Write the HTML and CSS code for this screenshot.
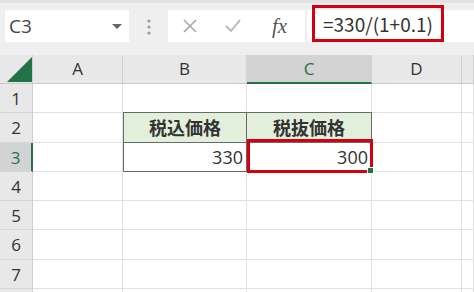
FILE: index.html
```html
<!DOCTYPE html>
<html lang="ja">
<head>
    <meta charset="UTF-8">
    <title>税抜価格</title>
    <link rel="stylesheet" href="styles.css">
</head>
<body>
    <div class="toolbar">
        <div class="namebox">
            <span>C3</span>
            <span class="caret"></span>
        </div>
        <svg class="dots" width="6" height="18" viewBox="0 0 6 18">
            <circle cx="3" cy="3" r="1.6" fill="#9a9a9a"/>
            <circle cx="3" cy="9" r="1.6" fill="#9a9a9a"/>
            <circle cx="3" cy="15" r="1.6" fill="#9a9a9a"/>
        </svg>
        <div class="fxbtns">
            <svg width="16" height="16" viewBox="0 0 16 16">
                <path d="M2 2 L14 14 M14 2 L2 14" stroke="#a8a8a8" stroke-width="1.6" fill="none"/>
            </svg>
            <svg width="16" height="14" viewBox="0 0 16 14">
                <path d="M1 7 L6 12 L15 1" stroke="#b4b4b4" stroke-width="1.8" fill="none"/>
            </svg>
            <span class="fx">fx</span>
        </div>
        <div class="formula">
            <span class="formula-text">=330/(1+0.1)</span>
        </div>
    </div>

    <div class="sheet">
        <div class="corner"><span class="tri"></span></div>
        <div class="colhead">A</div>
        <div class="colhead">B</div>
        <div class="colhead active">C</div>
        <div class="colhead">D</div>
        <div class="colhead"></div>

        <div class="rowhead">1</div>
        <div class="cell"></div><div class="cell"></div><div class="cell"></div><div class="cell"></div><div class="cell"></div>

        <div class="rowhead">2</div>
        <div class="cell"></div>
        <div class="cell title first">税込価格</div>
        <div class="cell title">税抜価格</div>
        <div class="cell"></div><div class="cell"></div>

        <div class="rowhead active">3</div>
        <div class="cell"></div>
        <div class="cell num first">330</div>
        <div class="cell num selected">300<span class="handle"></span></div>
        <div class="cell"></div><div class="cell"></div>

        <div class="rowhead">4</div>
        <div class="cell"></div><div class="cell"></div><div class="cell"></div><div class="cell"></div><div class="cell"></div>
        <div class="rowhead">5</div>
        <div class="cell"></div><div class="cell"></div><div class="cell"></div><div class="cell"></div><div class="cell"></div>
        <div class="rowhead">6</div>
        <div class="cell"></div><div class="cell"></div><div class="cell"></div><div class="cell"></div><div class="cell"></div>
        <div class="rowhead">7</div>
        <div class="cell"></div><div class="cell"></div><div class="cell"></div><div class="cell"></div><div class="cell"></div>
        <div class="rowhead last"></div>
        <div class="cell last"></div><div class="cell last"></div><div class="cell last"></div><div class="cell last"></div><div class="cell last"></div>
    </div>
</body>
</html>
```

FILE: styles.css
```css
body {
    margin: 0;
    width: 474px;
    height: 292px;
    overflow: hidden;
    background: #fff;
    font-family: "Open Sans", "Noto Sans CJK JP", sans-serif;
    color: #333;
}
.toolbar {
    display: flex;
    align-items: flex-start;
    height: 55px;
    box-sizing: border-box;
    padding: 7px 0 0 5px;
    background: #efefef;
    border-top: 3px solid #e2e2e2;
}
.namebox {
    width: 124px;
    height: 32px;
    background: #fff;
    display: flex;
    align-items: center;
    justify-content: space-between;
    padding: 0 7px 0 4px;
    box-sizing: border-box;
    font-size: 19px;
    color: #444;
}
.caret {
    width: 0;
    height: 0;
    border-left: 5px solid transparent;
    border-right: 5px solid transparent;
    border-top: 5px solid #666;
}
.dots {
    margin: 8px 16px 0 17px;
}
.fxbtns {
    width: 137px;
    height: 32px;
    background: #fff;
    display: flex;
    align-items: center;
    box-sizing: border-box;
    padding-left: 14px;
    gap: 27px;
}
.fx {
    font-family: "Liberation Serif", serif;
    font-style: italic;
    font-size: 21px;
    color: #555;
    margin-left: 4px;
}
.formula {
    flex: 1;
    height: 32px;
    margin-left: 2px;
    background: #fff;
    padding-left: 5px;
}
.formula-text {
    display: inline-block;
    box-sizing: border-box;
    width: 132px;
    height: 37px;
    margin-top: -5px;
    border: 3px solid #d4000f;
    padding-left: 8px;
    line-height: 31px;
    font-family: "Noto Sans CJK JP", sans-serif;
    font-size: 19px;
    color: #333;
}
.sheet {
    display: grid;
    grid-template-columns: 33px 90px 124px 125px 90px 1fr;
    grid-template-rows: 29px repeat(7, 29.3px) 3px;
}
.sheet > div {
    box-sizing: border-box;
}
.corner {
    background: #e8e8e8;
    border-right: 1px solid #cfcfcf;
    border-bottom: 1px solid #c8c8c8;
    padding: 2px 0 0 7px;
}
.tri {
    display: block;
    width: 0;
    height: 0;
    border-left: 25px solid transparent;
    border-bottom: 25px solid #217346;
}
.colhead {
    background: #e8e8e8;
    border-right: 1px solid #d2d2d2;
    border-bottom: 1px solid #c8c8c8;
    text-align: center;
    font-size: 17px;
    line-height: 28px;
    color: #333;
}
.colhead.active {
    background: #d3d3d3;
    border-bottom: 2px solid #217346;
    color: #217346;
}
.rowhead {
    background: #e8e8e8;
    border-right: 1px solid #cfcfcf;
    border-bottom: 1px solid #d6d6d6;
    text-align: center;
    font-size: 17px;
    line-height: 29px;
    color: #333;
}
.rowhead.active {
    background: #d3d3d3;
    border-right: 2px solid #217346;
    color: #217346;
}
.cell {
    border-right: 1px solid #e1e1e1;
    border-bottom: 1px solid #e1e1e1;
    font-size: 18px;
    line-height: 28px;
}
.last {
    border-bottom: none;
}
.title {
    background: #e2efda;
    font-family: "Noto Sans CJK JP", sans-serif;
    font-weight: bold;
    text-align: center;
    font-size: 18px;
    border-top: 1px solid #6a6a6a;
    border-right: 1px solid #6a6a6a;
    border-bottom: 1px solid #6a6a6a;
    margin-top: -1px;
}
.num {
    text-align: right;
    padding-right: 3px;
    border-right: 1px solid #6a6a6a;
    border-bottom: 1px solid #6a6a6a;
    color: #333;
}
.first {
    border-left: 1px solid #6a6a6a;
}
.selected {
    position: relative;
}
.selected::after {
    content: "";
    position: absolute;
    left: 0;
    top: -4px;
    right: -2px;
    bottom: -2px;
    border: 3px solid #d4000f;
}
.handle {
    position: absolute;
    right: -3px;
    bottom: -3px;
    width: 5px;
    height: 5px;
    background: #217346;
    border: 1px solid #fff;
    z-index: 1;
}
```
